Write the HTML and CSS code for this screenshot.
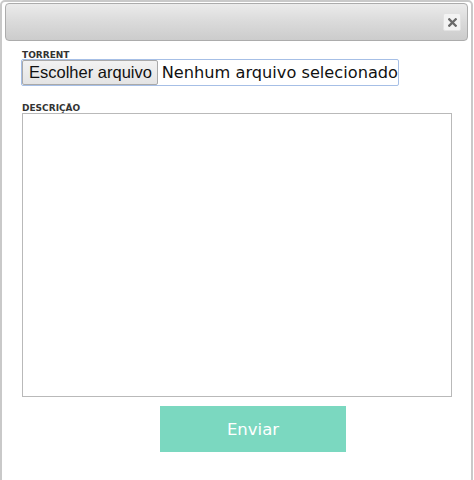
FILE: index.html
```html
<!DOCTYPE html>
<html lang="pt">
<head>
<meta charset="utf-8">
<title>Enviar torrent</title>
<link rel="stylesheet" href="styles.css">
</head>
<body>
<div class="dialog">
  <div class="titlebar">
    <span class="title"></span>
    <button class="close" type="button" aria-label="Fechar">
      <svg width="9" height="9" viewBox="0 0 9 9"><path d="M1.3 1.3 L7.7 7.7 M7.7 1.3 L1.3 7.7" stroke="#6a6a6a" stroke-width="2.3" stroke-linecap="square" fill="none"/></svg>
    </button>
  </div>
  <form class="content">
    <label class="field-label">TORRENT</label>
    <div class="file-input">
      <span class="file-btn">Escolher arquivo</span>
      <span class="file-name">Nenhum arquivo selecionado</span>
    </div>
    <label class="field-label desc-label">DESCRIÇÃO</label>
    <textarea class="desc"></textarea>
    <button class="submit" type="button">Enviar</button>
  </form>
</div>
</body>
</html>
```
FILE: styles.css
```css
html, body {
  margin: 0;
  padding: 0;
  background: #ffffff;
}
body {
  width: 474px;
  height: 480px;
  overflow: hidden;
}
.dialog {
  box-sizing: border-box;
  width: 473px;
  height: 484px;
  border: 2px solid #c9c9c9;
  border-radius: 5px;
  padding: 1px 3px 0 3px;
  background: #ffffff;
}
.titlebar {
  box-sizing: border-box;
  height: 38px;
  border: 1px solid #acacac;
  border-radius: 4px;
  background: linear-gradient(to bottom, #ebebeb 0%, #dadada 50%, #cccccc 100%);
  display: flex;
  align-items: center;
  justify-content: space-between;
  padding: 0 6px 0 10px;
}
.close {
  width: 18px;
  height: 18px;
  padding: 0;
  margin: 0;
  border: 1px solid #e2e2e2;
  border-radius: 2px;
  background: #f3f3f3;
  display: flex;
  align-items: center;
  justify-content: center;
}
.close svg { display: block; }
.content {
  display: flex;
  flex-direction: column;
  align-items: flex-start;
  padding: 10px 0 0 16px;
  margin: 0;
}
.field-label {
  font-family: "DejaVu Sans", Verdana, sans-serif;
  font-weight: bold;
  font-size: 9px;
  line-height: 8px;
  color: #333333;
  margin-left: 1px;
}
.desc-label {
  margin-top: 18px;
  margin-bottom: 1px;
}
.file-input {
  box-sizing: border-box;
  width: 378px;
  height: 27px;
  border: 1px solid #a6bfe6;
  border-radius: 2px;
  display: flex;
  align-items: stretch;
  background: #ffffff;
}
.file-btn {
  box-sizing: border-box;
  width: 136px;
  border: 1px solid #a9a9a9;
  border-radius: 2px;
  background: linear-gradient(to bottom, #f2f2f2, #e4e4e4);
  font-family: "Liberation Sans", Arial, sans-serif;
  font-size: 16.5px;
  color: #111111;
  display: flex;
  align-items: center;
  padding-left: 6px;
  white-space: nowrap;
}
.file-name {
  font-family: "DejaVu Sans", Verdana, sans-serif;
  font-size: 16.2px;
  color: #111111;
  display: flex;
  align-items: center;
  padding-left: 4px;
  white-space: nowrap;
}
.desc {
  box-sizing: border-box;
  width: 430px;
  height: 284px;
  margin: 0 0 0 1px;
  border: 1px solid #b9b9b9;
  resize: none;
  background: #ffffff;
  padding: 2px;
}
.submit {
  box-sizing: border-box;
  width: 186px;
  height: 46px;
  margin: 9px 0 0 139px;
  border: none;
  background: #7bd8c0;
  color: #ffffff;
  font-family: "DejaVu Sans", Verdana, sans-serif;
  font-size: 16.5px;
  padding: 0;
}
```
